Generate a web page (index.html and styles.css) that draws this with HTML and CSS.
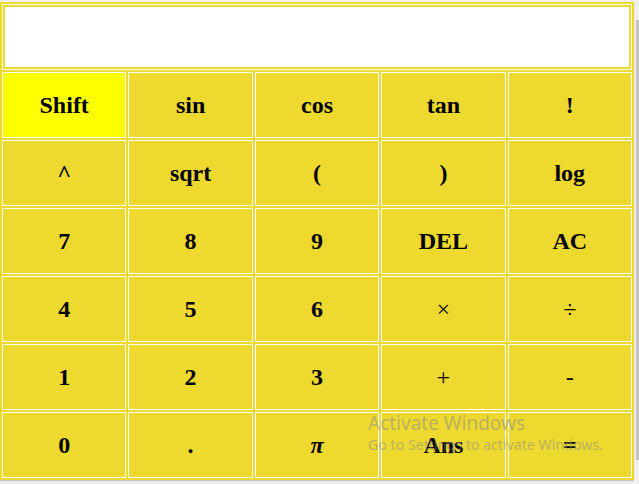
FILE: index.html
```html
<!DOCTYPE html>
<html>
<head>
<meta charset="utf-8">
<link rel="stylesheet" href="styles.css">
</head>
<body>
<div class="calc">
  <div class="display-cell"><div class="display"></div></div>
  <div class="key shift">Shift</div>
  <div class="key">sin</div>
  <div class="key">cos</div>
  <div class="key">tan</div>
  <div class="key">!</div>
  <div class="key">^</div>
  <div class="key">sqrt</div>
  <div class="key">(</div>
  <div class="key">)</div>
  <div class="key">log</div>
  <div class="key">7</div>
  <div class="key">8</div>
  <div class="key">9</div>
  <div class="key">DEL</div>
  <div class="key">AC</div>
  <div class="key">4</div>
  <div class="key">5</div>
  <div class="key">6</div>
  <div class="key op">×</div>
  <div class="key op">÷</div>
  <div class="key">1</div>
  <div class="key">2</div>
  <div class="key">3</div>
  <div class="key op">+</div>
  <div class="key op">-</div>
  <div class="key">0</div>
  <div class="key">.</div>
  <div class="key pi">π</div>
  <div class="key">Ans</div>
  <div class="key">=</div>
</div>
<div class="scroll-thumb"></div>
<div class="watermark">
  <div class="wm-title">Activate Windows</div>
  <div class="wm-sub">Go to Settings to activate Windows.</div>
</div>
</body>
</html>
```
FILE: styles.css
```css
html, body {
  margin: 0;
  padding: 0;
  background: #f0f0f0;
  height: 484px;
  overflow: hidden;
}

body {
  padding-top: 2px;
  position: relative;
}

.calc {
  width: 634px;
  box-sizing: border-box;
  padding: 2px;
  display: grid;
  grid-template-columns: repeat(5, 1fr);
  grid-template-rows: repeat(7, 66px);
  gap: 2px;
  background: #eed92f;
  box-shadow: 0 1px 1px rgba(0, 0, 0, 0.18);
}

.display-cell {
  grid-column: 1 / 6;
  border: 1px solid #ffffff;
  box-sizing: border-box;
  display: flex;
}

.display {
  flex: 1;
  background: #ffffff;
  border: 2px solid #eed92f;
}

.key {
  border: 1px solid #ffffff;
  box-sizing: border-box;
  display: flex;
  align-items: center;
  justify-content: center;
  font-family: "Liberation Serif", "Times New Roman", serif;
  font-weight: bold;
  font-size: 24px;
  color: #000000;
}

.key.shift {
  background: #ffff00;
}

.key.op {
  font-weight: normal;
}

.key.pi {
  font-style: italic;
}

.scroll-thumb {
  position: absolute;
  left: 636px;
  top: 20px;
  width: 3px;
  height: 440px;
  background: #c2c2c2;
}

.watermark {
  position: absolute;
  left: 368px;
  top: 410px;
  font-family: "Noto Sans", "Open Sans", sans-serif;
  color: rgba(140, 140, 140, 0.55);
  pointer-events: none;
}

.wm-title {
  font-size: 19px;
  line-height: 26px;
}

.wm-sub {
  font-size: 14.2px;
  line-height: 18px;
}
```
